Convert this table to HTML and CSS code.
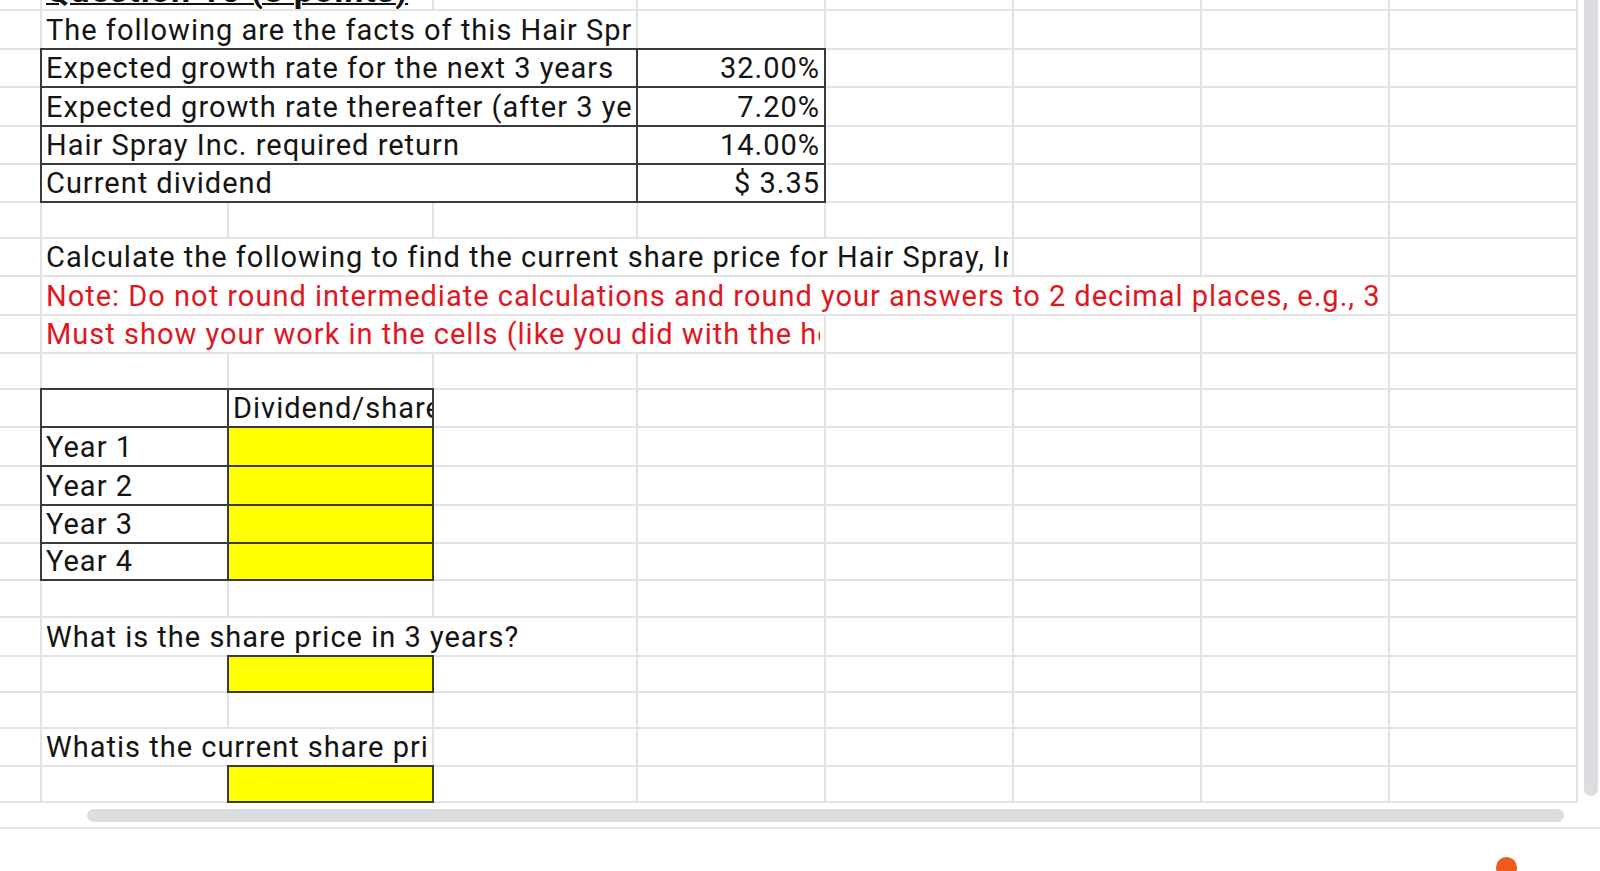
FILE: index.html
```html
<!DOCTYPE html>
<html>
<head>
<meta charset="utf-8">
<title>Hair Spray Inc.</title>
<link rel="stylesheet" href="styles.css">
</head>
<body>
<div class="screen">
  <div class="main">
    <div class="sheet">
      <!-- row 0 -->
      <div class="c"></div>
      <div class="c s2 title"><span class="ttl">Question 10 (3 points)</span></div>
      <div class="c"></div><div class="c"></div><div class="c"></div><div class="c"></div><div class="c"></div><div class="c"></div>
      <!-- row 1 -->
      <div class="c"></div>
      <div class="c s3"><span class="clip">The following are the facts of this Hair Spray, Inc.:</span></div>
      <div class="c"></div><div class="c"></div><div class="c"></div><div class="c"></div><div class="c"></div>
      <!-- row 2 -->
      <div class="c"></div>
      <div class="c s3 bd"><span class="clip tight">Expected growth rate for the next 3 years</span></div>
      <div class="c bd num">32.00%</div>
      <div class="c"></div><div class="c"></div><div class="c"></div><div class="c"></div>
      <!-- row 3 -->
      <div class="c"></div>
      <div class="c s3 bd"><span class="clip tight">Expected growth rate thereafter (after 3 years)</span></div>
      <div class="c bd num">7.20%</div>
      <div class="c"></div><div class="c"></div><div class="c"></div><div class="c"></div>
      <!-- row 4 -->
      <div class="c"></div>
      <div class="c s3 bd"><span class="clip tight">Hair Spray Inc. required return</span></div>
      <div class="c bd num">14.00%</div>
      <div class="c"></div><div class="c"></div><div class="c"></div><div class="c"></div>
      <!-- row 5 -->
      <div class="c"></div>
      <div class="c s3 bd"><span class="clip tight">Current dividend</span></div>
      <div class="c bd num">$ 3.35</div>
      <div class="c"></div><div class="c"></div><div class="c"></div><div class="c"></div>
      <!-- row 6 -->
      <div class="c"></div><div class="c"></div><div class="c"></div><div class="c"></div><div class="c"></div><div class="c"></div><div class="c"></div><div class="c"></div><div class="c"></div>
      <!-- row 7 -->
      <div class="c"></div>
      <div class="c s5"><span class="clip">Calculate the following to find the current share price for Hair Spray, Inc.</span></div>
      <div class="c"></div><div class="c"></div><div class="c"></div>
      <!-- row 8 -->
      <div class="c"></div>
      <div class="c s7 red"><span class="clip wide">Note: Do not round intermediate calculations and round your answers to 2 decimal places, e.g., 32.16.</span></div>
      <div class="c"></div>
      <!-- row 9 -->
      <div class="c"></div>
      <div class="c s4 red"><span class="clip">Must show your work in the cells (like you did with the homework).</span></div>
      <div class="c"></div><div class="c"></div><div class="c"></div><div class="c"></div>
      <!-- row 10 -->
      <div class="c"></div><div class="c"></div><div class="c"></div><div class="c"></div><div class="c"></div><div class="c"></div><div class="c"></div><div class="c"></div><div class="c"></div>
      <!-- row 11 -->
      <div class="c"></div>
      <div class="c bd"></div>
      <div class="c bd"><span class="clip tight0">Dividend/share</span></div>
      <div class="c"></div><div class="c"></div><div class="c"></div><div class="c"></div><div class="c"></div><div class="c"></div>
      <!-- row 12 -->
      <div class="c"></div>
      <div class="c bd">Year 1</div>
      <div class="c bd yl"></div>
      <div class="c"></div><div class="c"></div><div class="c"></div><div class="c"></div><div class="c"></div><div class="c"></div>
      <!-- row 13 -->
      <div class="c"></div>
      <div class="c bd">Year 2</div>
      <div class="c bd yl"></div>
      <div class="c"></div><div class="c"></div><div class="c"></div><div class="c"></div><div class="c"></div><div class="c"></div>
      <!-- row 14 -->
      <div class="c"></div>
      <div class="c bd">Year 3</div>
      <div class="c bd yl"></div>
      <div class="c"></div><div class="c"></div><div class="c"></div><div class="c"></div><div class="c"></div><div class="c"></div>
      <!-- row 15 -->
      <div class="c"></div>
      <div class="c bd">Year 4</div>
      <div class="c bd yl"></div>
      <div class="c"></div><div class="c"></div><div class="c"></div><div class="c"></div><div class="c"></div><div class="c"></div>
      <!-- row 16 -->
      <div class="c"></div><div class="c"></div><div class="c"></div><div class="c"></div><div class="c"></div><div class="c"></div><div class="c"></div><div class="c"></div><div class="c"></div>
      <!-- row 17 -->
      <div class="c"></div>
      <div class="c s3"><span class="clip">What is the share price in 3 years?</span></div>
      <div class="c"></div><div class="c"></div><div class="c"></div><div class="c"></div><div class="c"></div>
      <!-- row 18 -->
      <div class="c"></div>
      <div class="c"></div>
      <div class="c bd yl"></div>
      <div class="c"></div><div class="c"></div><div class="c"></div><div class="c"></div><div class="c"></div><div class="c"></div>
      <!-- row 19 -->
      <div class="c"></div><div class="c"></div><div class="c"></div><div class="c"></div><div class="c"></div><div class="c"></div><div class="c"></div><div class="c"></div><div class="c"></div>
      <!-- row 20 -->
      <div class="c"></div>
      <div class="c s2"><span class="clip">Whatis the current share price?</span></div>
      <div class="c"></div><div class="c"></div><div class="c"></div><div class="c"></div><div class="c"></div><div class="c"></div>
      <!-- row 21 -->
      <div class="c"></div>
      <div class="c"></div>
      <div class="c bd yl"></div>
      <div class="c"></div><div class="c"></div><div class="c"></div><div class="c"></div><div class="c"></div><div class="c"></div>
    </div>
    <div class="vgutter"><div class="vbar"></div></div>
  </div>
  <div class="footer">
    <div class="hbar"></div>
    <div class="divider"></div>
    <div class="dotrow"><div class="dot"></div></div>
  </div>
</div>
</body>
</html>
```

FILE: styles.css
```css
html, body {
  margin: 0;
  padding: 0;
  background: #ffffff;
}

body {
  width: 1600px;
  height: 871px;
  overflow: hidden;
  font-family: Roboto, "Noto Sans", "Liberation Sans", sans-serif;
}

.screen {
  display: flex;
  flex-direction: column;
  width: 1600px;
  height: 871px;
  overflow: hidden;
}

.main {
  display: flex;
  align-items: flex-start;
  height: 803px;
  flex: none;
}

.sheet {
  display: grid;
  grid-template-columns: 40px 185px 203px 202px 186px 186px 186px 186px 186px;
  grid-template-rows: 9px 37px 36px 37px 36px 36px 34px 36px 37px 36px 34px 36px 37px 37px 36px 35px 35px 37px 34px 34px 36px 34px;
  gap: 2px;
  padding: 0 2px 2px 0;
  background: #e3e3e3;
  flex: none;
}

.c {
  background: #ffffff;
  display: flex;
  align-items: flex-end;
  min-width: 0;
  overflow: hidden;
  white-space: nowrap;
  padding: 0 0 1px 4px;
  font-size: 29px;
  letter-spacing: 1px;
  line-height: normal;
  color: #141414;
}

.s2 { grid-column: span 2; }
.s3 { grid-column: span 3; }
.s4 { grid-column: span 4; }
.s5 { grid-column: span 5; }
.s7 { grid-column: span 7; }

.clip {
  display: block;
  flex: 1 1 auto;
  min-width: 0;
  overflow: hidden;
  margin-right: 4px;
}

.clip.tight { margin-right: 3px; }
.clip.tight0 { margin-right: 0; }
.clip.wide { margin-right: 9px; }

.red { color: #e1161e; }

.num {
  justify-content: flex-end;
  padding-right: 4px;
}

.bd {
  box-shadow: 0 0 0 2px #3a3a3a;
}

.yl {
  background: #ffff00;
}

.title {
  padding-bottom: 0;
}

.ttl {
  font-size: 34px;
  font-weight: 700;
  line-height: 34px;
  margin-bottom: 2px;
  text-decoration: underline;
  text-decoration-thickness: 2px;
}

.vgutter {
  flex: none;
  width: 22px;
  padding-left: 6px;
  box-sizing: border-box;
}

.vbar {
  width: 14px;
  height: 796px;
  background: #dcdde0;
  border-radius: 0 0 7px 7px;
}

.footer {
  flex: none;
  height: 68px;
  display: flex;
  flex-direction: column;
}

.hbar {
  margin: 6px 0 0 87px;
  width: 1477px;
  height: 13px;
  border-radius: 7px;
  background: #dcdde0;
  flex: none;
}

.divider {
  margin-top: 5px;
  height: 2px;
  background: #e6e6e6;
  flex: none;
}

.dotrow {
  display: flex;
  justify-content: flex-end;
  padding: 28px 83px 0 0;
}

.dot {
  width: 21px;
  height: 21px;
  border-radius: 50%;
  background: #ee5b1b;
  flex: none;
}
```
